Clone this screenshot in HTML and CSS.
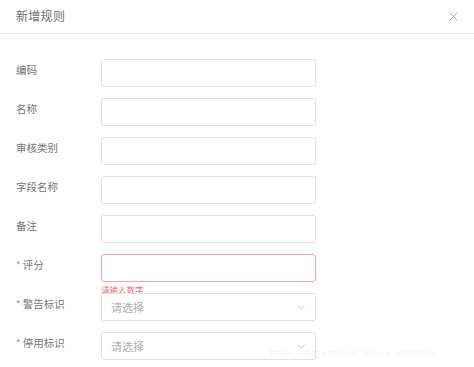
FILE: index.html
```html
<!DOCTYPE html>
<html lang="zh">
<head>
<meta charset="utf-8">
<title>新增规则</title>
<link rel="stylesheet" href="styles.css">
</head>
<body>
<div class="dialog">
  <div class="header">
    <span class="title">新增规则</span>
    <span class="close">
      <svg width="9" height="9" viewBox="0 0 9 9"><path d="M0.5 0.5 L8.5 8.5 M8.5 0.5 L0.5 8.5" stroke="#b0b0b0" stroke-width="1" fill="none"/></svg>
    </span>
  </div>
  <div class="form">
    <div class="row"><label class="label">编码</label><div class="control"><div class="input"></div></div></div>
    <div class="row"><label class="label">名称</label><div class="control"><div class="input"></div></div></div>
    <div class="row"><label class="label">审核类别</label><div class="control"><div class="input"></div></div></div>
    <div class="row"><label class="label">字段名称</label><div class="control"><div class="input"></div></div></div>
    <div class="row"><label class="label">备注</label><div class="control"><div class="input"></div></div></div>
    <div class="row"><label class="label"><span class="star">*</span>评分</label><div class="control"><div class="input error"></div><div class="error-msg">请输入数字</div></div></div>
    <div class="row"><label class="label"><span class="star">*</span>警告标识</label><div class="control"><div class="input select"><span class="placeholder">请选择</span><svg class="arrow" width="8" height="5" viewBox="0 0 8 5"><path d="M0.5 0.5 L4 4 L7.5 0.5" stroke="#c8c8c8" stroke-width="1" fill="none"/></svg></div></div></div>
    <div class="row"><label class="label"><span class="star">*</span>停用标识</label><div class="control"><div class="input select"><span class="placeholder">请选择</span><svg class="arrow" width="8" height="5" viewBox="0 0 8 5"><path d="M0.5 0.5 L4 4 L7.5 0.5" stroke="#c8c8c8" stroke-width="1" fill="none"/></svg></div></div></div>
  </div>
  <div class="watermark">https://blog.csdn.net/weixin_44990584</div>
</div>
</body>
</html>
```
FILE: styles.css
```css
* { box-sizing: border-box; }
html, body { margin: 0; padding: 0; background: #fff; }
body {
  font-family: "Noto Sans CJK SC", "Liberation Sans", sans-serif;
  width: 474px;
  height: 367px;
  overflow: hidden;
}
.dialog { position: relative; width: 474px; height: 367px; }
.header {
  height: 34px;
  border-bottom: 1px solid #ededed;
  display: flex;
  align-items: center;
  justify-content: space-between;
  padding: 0 16px 2px 16px;
}
.title { font-size: 12px; color: #707070; letter-spacing: 0.3px; }
.close { display: flex; width: 9px; height: 9px; margin-top: 2px; }
.form { padding-top: 25px; }
.row { display: flex; align-items: flex-start; height: 28px; margin-bottom: 11px; }
.label {
  width: 101px;
  padding-left: 16px;
  font-size: 10.5px;
  line-height: 22px;
  color: #747474;
  display: flex;
  align-items: center;
}
.star { color: #f56c6c; margin-right: 2px; font-size: 10px; }
.control { position: relative; width: 215px; }
.input {
  width: 215px;
  height: 28px;
  border: 1px solid #dfe1e6;
  border-radius: 3px;
  background: #fff;
}
.input.error { border-color: #f3a3a3; }
.error-msg {
  position: absolute;
  left: 0;
  top: 29px;
  font-size: 8.5px;
  line-height: 12px;
  color: #f56c6c;
}
.select { display: flex; align-items: center; justify-content: space-between; padding: 0 10px 0 9px; }
.placeholder { font-size: 11px; color: #b0b0b0; }
.arrow { display: block; }
.watermark {
  position: absolute;
  left: 270px;
  top: 347px;
  font-size: 8px;
  color: #f3f3f3;
  letter-spacing: 0.5px;
}
```
